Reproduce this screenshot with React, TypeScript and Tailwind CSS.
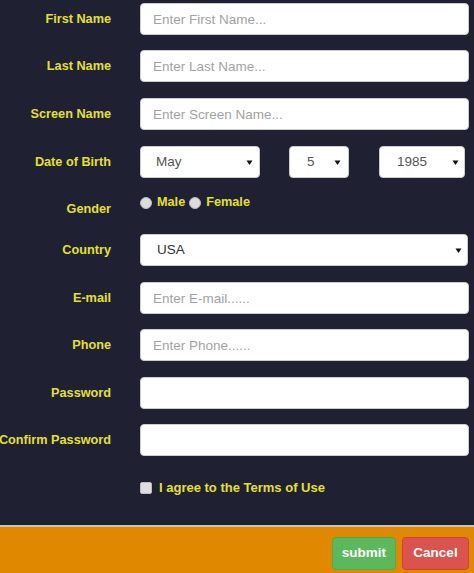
import React from "react";

const Label = ({ children }: { children: React.ReactNode }) => (
  <div className="w-[111px] shrink-0 flex justify-end whitespace-nowrap text-[12.7px] font-bold text-[#e4e02e] leading-4">
    {children}
  </div>
);

const TextRow = ({ label, placeholder, type = "text", cls }: { label: string; placeholder?: string; type?: string; cls: string }) => (
  <div className={`flex items-center h-8 ${cls}`}>
    <Label>{label}</Label>
    <input
      type={type}
      placeholder={placeholder}
      className="ml-[29px] w-[329px] h-8 rounded-[4px] border border-[#ccc] bg-white pl-3 text-[13.5px] text-[#555] placeholder:text-[#a3a3a3] outline-none"
    />
  </div>
);

const Arrow = () => (
  <svg width="7" height="7" viewBox="0 0 7 7" className="shrink-0">
    <path d="M0.5 1.5 L6.5 1.5 L3.5 6 Z" fill="#111" />
  </svg>
);

const Select = ({ text, w, pl, pr, color = "#555" }: { text: string; w: string; pl: string; pr: string; color?: string }) => (
  <div className={`${w} h-8 rounded-[4px] border border-[#ccc] bg-white flex items-center justify-between ${pl} ${pr} text-[13.5px]`} style={{ color }}>
    <span>{text}</span>
    <Arrow />
  </div>
);

export default function App() {
  return (
    <div className="w-[474px] h-[573px] bg-[#1f2132] flex flex-col font-['Liberation_Sans',Arial,sans-serif] overflow-hidden">
      <div className="flex-1 flex flex-col pt-[3px]">
        <TextRow label="First Name" placeholder="Enter First Name..." cls="mb-[15px]" />
        <TextRow label="Last Name" placeholder="Enter Last Name..." cls="mb-[16px]" />
        <TextRow label="Screen Name" placeholder="Enter Screen Name..." cls="mb-[16px]" />
        <div className="flex items-center h-8">
          <Label>Date of Birth</Label>
          <div className="ml-[29px] flex items-center">
            <Select text="May" w="w-[120px]" pl="pl-[15px]" pr="pr-[6px]" />
            <div className="ml-[29px]">
              <Select text="5" w="w-[60px]" pl="pl-[17px]" pr="pr-[7px]" />
            </div>
            <div className="ml-[30px]">
              <Select text="1985" w="w-[86px]" pl="pl-[17px]" pr="pr-[5px]" />
            </div>
          </div>
        </div>
        <div className="flex h-[56px]">
          <div className="mt-[23px]">
            <Label>Gender</Label>
          </div>
          <div className="ml-[29px] mt-[17px] flex items-center h-4 text-[12.7px] font-bold text-[#e4e02e]">
            <span className="w-3 h-3 rounded-full bg-[#dcdcdc] border border-[#bbb] mr-[5px]" />
            <span>Male</span>
            <span className="w-3 h-3 rounded-full bg-[#dcdcdc] border border-[#bbb] ml-[4px] mr-[5px]" />
            <span>Female</span>
          </div>
        </div>
        <div className="flex items-center h-8 mb-[16px]">
          <Label>Country</Label>
          <div className="ml-[29px]">
            <Select text="USA" w="w-[328px]" pl="pl-4" pr="pr-[5px]" color="#333" />
          </div>
        </div>
        <TextRow label="E-mail" placeholder="Enter E-mail......" type="email" cls="mb-[15px]" />
        <TextRow label="Phone" placeholder="Enter Phone......" cls="mb-[16px]" />
        <TextRow label="Password" type="password" cls="mb-[15px]" />
        <TextRow label="Confirm Password" type="password" cls="" />
        <div className="flex items-center mt-[26px] h-3">
          <div className="w-[111px] shrink-0" />
          <span className="ml-[29px] w-3 h-3 rounded-[2px] bg-[#dedede] border border-[#bbb]" />
          <span className="ml-[7px] text-[13px] font-bold text-[#e4e02e] leading-4 whitespace-nowrap">I agree to the Terms of Use</span>
        </div>
      </div>
      <div className="h-[48px] border-t-2 border-[#c9c2b8] bg-[#df8800] flex justify-end items-start pt-[10px] pr-[5px] gap-[6px]">
        <button className="w-[64px] h-[33px] rounded-[4px] bg-[#5cb85c] border border-[#4cae4c] text-white text-[13.5px] font-bold">submit</button>
        <button className="w-[67px] h-[33px] rounded-[4px] bg-[#d9534f] border border-[#d43f3a] text-white text-[13.5px] font-bold">Cancel</button>
      </div>
    </div>
  );
}
